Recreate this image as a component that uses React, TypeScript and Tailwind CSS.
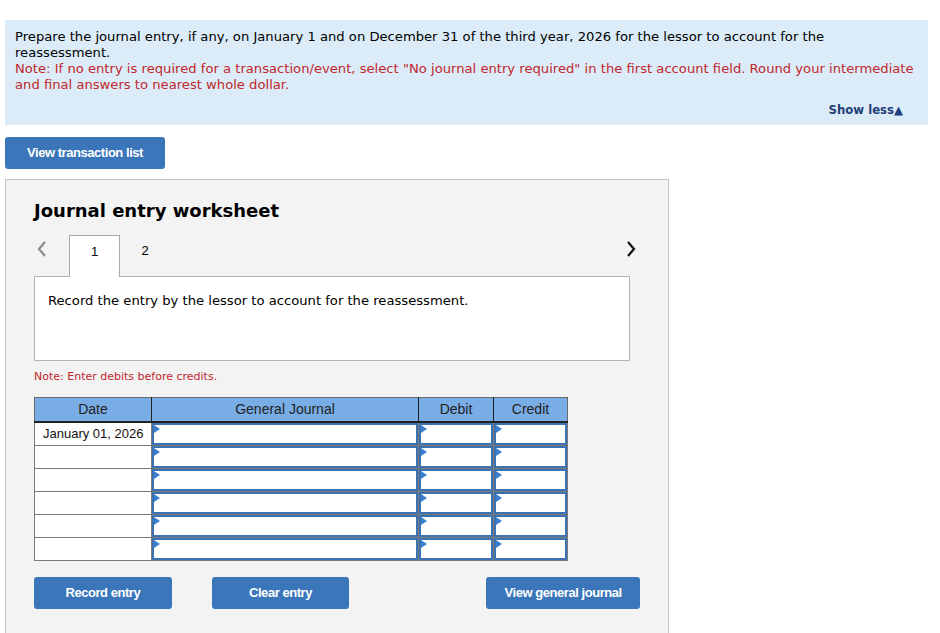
export default function App() {
  const rows = [0, 1, 2, 3, 4, 5];

  const Marker = () => (
    <span className="absolute left-0 top-0 w-0 h-0 border-t-[4px] border-b-[4px] border-l-[6px] border-t-transparent border-b-transparent border-l-[#3b7fd0]"></span>
  );

  return (
    <div className="min-h-screen bg-white pt-5 px-[5px] text-black" style={{ fontFamily: '"DejaVu Sans", Verdana, sans-serif' }}>
      {/* Instructions */}
      <div className="w-[923px] bg-[#dbecf8] px-[10px] pt-[9px] pb-[7px] text-[13.15px] leading-4">
        <div className="max-w-[900px]">
          <p>
            Prepare the journal entry, if any, on January 1 and on December 31 of the third year, 2026 for the lessor to account for the reassessment.
          </p>
          <p className="text-[#c1272d]">
            Note: If no entry is required for a transaction/event, select "No journal entry required" in the first account field. Round your intermediate and final answers to nearest whole dollar.
          </p>
        </div>
        <div className="flex justify-end pr-[15px] mt-[9px]">
          <span className="font-bold text-[#243f7a] text-[11.7px]">Show less▲</span>
        </div>
      </div>

      {/* Transaction list button */}
      <button
        className="mt-3 w-[160px] h-[32px] rounded-[3px] bg-[#3a76b9] text-white text-[13px] font-bold tracking-[-0.45px]"
        style={{ fontFamily: '"Liberation Sans", Arial, sans-serif' }}
      >
        View transaction list
      </button>

      {/* Worksheet panel */}
      <div className="mt-[10px] w-[664px] h-[460px] bg-[#f3f3f3] border border-[#c6c6c6] px-[28px] pt-[19px]">
        <h2 className="text-[18px] font-bold leading-6">Journal entry worksheet</h2>

        {/* Tabs */}
        <div className="mt-[12px] flex items-end relative h-[41px]">
          <span className="absolute left-[2px] top-[5px]">
            <svg width="12" height="18" viewBox="0 0 12 18">
              <path d="M9 2 L3 9 L9 16" fill="none" stroke="#8a8a8a" strokeWidth="2.2" />
            </svg>
          </span>
          <div className="ml-[35px] w-[51px] h-[42px] bg-white border border-b-0 border-[#a8a8a8] flex items-start justify-center pt-[6px] text-[13px] relative z-10 -mb-px" style={{ fontFamily: '"Liberation Sans", Arial, sans-serif' }}>
            1
          </div>
          <div className="w-[50px] h-[41px] flex items-start justify-center pt-[6px] text-[13px]" style={{ fontFamily: '"Liberation Sans", Arial, sans-serif' }}>
            2
          </div>
          <span className="absolute right-[3px] top-[5px]">
            <svg width="12" height="18" viewBox="0 0 12 18">
              <path d="M3 2 L9 9 L3 16" fill="none" stroke="#111" strokeWidth="2.2" />
            </svg>
          </span>
        </div>

        <div className="w-[596px] h-[85px] bg-white border border-[#b4b4b4] px-[13px] pt-[14px] text-[13.15px]">
          Record the entry by the lessor to account for the reassessment.
        </div>

        <p className="mt-[8px] text-[11px] text-[#c1272d]">Note: Enter debits before credits.</p>

        {/* Journal table */}
        <table
          className="mt-[11px] border-collapse table-fixed w-[533px] text-[14px]"
          style={{ fontFamily: '"Liberation Sans", Arial, sans-serif' }}
        >
          <colgroup>
            <col className="w-[117px]" />
            <col className="w-[267px]" />
            <col className="w-[75px]" />
            <col className="w-[74px]" />
          </colgroup>
          <thead>
            <tr className="h-[25px] bg-[#79ade6] text-[#222]">
              <th className="border border-[#6a6a6a] border-b-2 border-b-[#222] border-r-[#222] font-normal">Date</th>
              <th className="border border-[#6a6a6a] border-b-2 border-b-[#222] border-r-[#222] font-normal">General Journal</th>
              <th className="border border-[#6a6a6a] border-b-2 border-b-[#222] border-r-[#222] font-normal">Debit</th>
              <th className="border border-[#6a6a6a] border-b-2 border-b-[#222] font-normal">Credit</th>
            </tr>
          </thead>
          <tbody>
            {rows.map((r) => (
              <tr key={r} className="h-[23px]">
                <td className="border border-[#7a7a7a] bg-white px-[8px] text-[13px] text-[#111] whitespace-nowrap overflow-hidden">
                  {r === 0 ? 'January 01, 2026' : ''}
                </td>
                <td className="border border-[#7a7a7a] bg-white p-0">
                  <div className="relative h-[22px] border-2 border-[#3d72b0]">
                    <Marker />
                  </div>
                </td>
                <td className="border border-[#7a7a7a] bg-white p-0">
                  <div className="relative h-[22px] border-2 border-[#3d72b0]">
                    <Marker />
                  </div>
                </td>
                <td className="border border-[#7a7a7a] bg-white p-0">
                  <div className="relative h-[22px] border-2 border-[#3d72b0]">
                    <Marker />
                  </div>
                </td>
              </tr>
            ))}
          </tbody>
        </table>

        {/* Actions */}
        <div className="mt-[16px] flex" style={{ fontFamily: '"Liberation Sans", Arial, sans-serif' }}>
          <button className="w-[138px] h-[32px] rounded-[3px] bg-[#3a76b9] text-white text-[13px] font-bold tracking-[-0.45px]">
            Record entry
          </button>
          <button className="ml-[40px] w-[138px] h-[32px] rounded-[3px] bg-[#3a76b9] text-white text-[13px] font-bold tracking-[-0.45px]">
            Clear entry
          </button>
          <button className="ml-[137px] w-[154px] h-[32px] rounded-[3px] bg-[#3a76b9] text-white text-[13px] font-bold tracking-[-0.45px]">
            View general journal
          </button>
        </div>
      </div>
    </div>
  );
}
